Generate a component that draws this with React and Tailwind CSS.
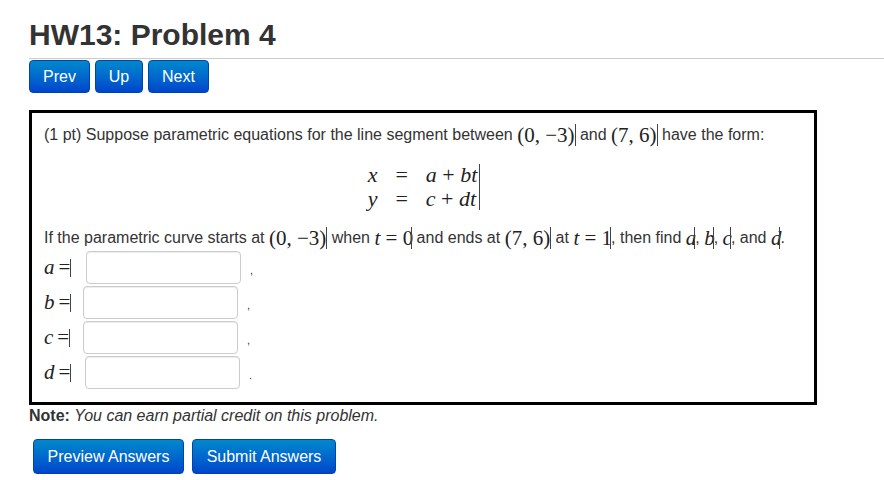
import React from 'react';

const mathFont = { fontFamily: '"Liberation Serif", "DejaVu Serif", serif' };

// thin caret-like bar that follows each rendered formula
const Bar = ({ h = 'h-[22px]', tight = false }) => (
  <span className={`inline-block w-px ${h} bg-[#444] align-middle ${tight ? '-ml-[2px]' : ''}`} />
);

const M = ({ children, tight = false }) => (
  <span className="inline-flex items-center">
    <span className="text-[21px] text-[#222] leading-none" style={mathFont}>
      {children}
    </span>
    <Bar tight={tight} />
  </span>
);

const V = ({ children }) => <i className="italic">{children}</i>;

const BlueButton = ({ children, className = '' }) => (
  <button
    className={`rounded-[4px] border border-[#0044aa] bg-gradient-to-b from-[#0088cc] to-[#0044cc] text-white text-[16px] leading-none ${className}`}
  >
    {children}
  </button>
);

const AnswerRow = ({ label, inputMl, punct }) => (
  <div className="flex items-center h-[35px]">
    <span className="w-[30px] flex items-center text-[21px] text-[#222]" style={mathFont}>
      <i>{label}</i>
      <span className="ml-[4px]">=</span>
      <Bar h="h-[18px]" />
    </span>
    <input
      className={`${inputMl} w-[155px] h-[33px] rounded-[4px] border border-[#cccccc] bg-white shadow-[inset_0_1px_1px_rgba(0,0,0,0.075)]`}
    />
    <span className="ml-[9px] mt-[6px] text-[11px] text-[#333]">{punct}</span>
  </div>
);

export default function App() {
  return (
    <div
      className="min-h-screen bg-white text-[#333] pt-[17px]"
      style={{ fontFamily: '"Liberation Sans", Arial, sans-serif' }}
    >
      <h1 className="pl-[29px] text-[30px] font-bold leading-[36px] text-[#333]">HW13: Problem 4</h1>
      <div className="ml-[29px] mt-[5px] border-t border-[#cccccc]" />

      <div className="ml-[29px] mt-[1px] flex gap-[5px]">
        <BlueButton className="w-[61px] h-[33px]">Prev</BlueButton>
        <BlueButton className="w-[48px] h-[33px]">Up</BlueButton>
        <BlueButton className="w-[61px] h-[33px]">Next</BlueButton>
      </div>

      <div className="ml-[29px] mt-[17px] w-[788px] border-[3px] border-black pl-[12px] pr-[12px] pt-[10px] pb-[12px] text-[16px]">
        <p className="flex items-center h-[24px] whitespace-pre">
          {'(1 pt) Suppose parametric equations for the line segment between '}
          <M>(0, −3)</M>
          {' and '}
          <M>(7, 6)</M>
          {' have the form:'}
        </p>

        <div className="flex justify-center mt-[16px] pl-[2px]">
          <div className="flex items-center">
            <div className="grid grid-cols-[auto_auto_auto] gap-x-[18px] text-[22px] text-[#222] leading-[24px]" style={mathFont}>
              <span className="text-right"><V>x</V></span>
              <span>=</span>
              <span>
                <V>a</V> + <V>bt</V>
              </span>
              <span className="text-right"><V>y</V></span>
              <span>=</span>
              <span>
                <V>c</V> + <V>dt</V>
              </span>
            </div>
            <span className="inline-block w-px h-[46px] bg-[#444] ml-[2px]" />
          </div>
        </div>

        <p className="flex items-center h-[24px] mt-[15px] whitespace-pre">
          {'If the parametric curve starts at '}
          <M>(0, −3)</M>
          {' when '}
          <M tight>
            <V>t</V> = 0
          </M>
          {' and ends at '}
          <M>(7, 6)</M>
          {' at '}
          <M tight>
            <V>t</V> = 1
          </M>
          {', then find '}
          <M tight><V>a</V></M>
          {', '}
          <M tight><V>b</V></M>
          {', '}
          <M tight><V>c</V></M>
          {', and '}
          <M tight><V>d</V></M>
          {'.'}
        </p>

        <div className="flex flex-col">
          <AnswerRow label="a" inputMl="ml-[12px]" punct="," />
          <AnswerRow label="b" inputMl="ml-[9px]" punct="," />
          <AnswerRow label="c" inputMl="ml-[9px]" punct="," />
          <AnswerRow label="d" inputMl="ml-[11px]" punct="." />
        </div>
      </div>

      <p className="ml-[29px] mt-[1px] text-[16px] leading-[20px]">
        <b>Note:</b> <i>You can earn partial credit on this problem.</i>
      </p>

      <div className="ml-[33px] mt-[13px] flex gap-[8px]">
        <BlueButton className="w-[151px] h-[35px]">Preview Answers</BlueButton>
        <BlueButton className="w-[144px] h-[35px]">Submit Answers</BlueButton>
      </div>
    </div>
  );
}
